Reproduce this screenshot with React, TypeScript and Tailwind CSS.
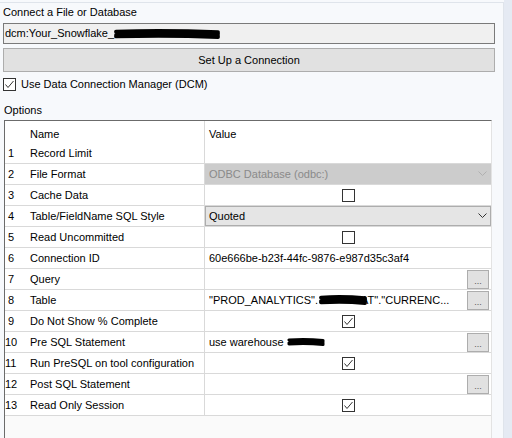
import React from 'react';

type Row = {
  name: string;
  kind: 'empty' | 'disabledSelect' | 'check' | 'select' | 'text' | 'button' | 'textButton';
  value?: React.ReactNode;
  checked?: boolean;
};

const Check: React.FC<{ checked?: boolean }> = ({ checked }) => (
  <div className="w-[13px] h-[13px] border border-[#333333] bg-white flex items-center justify-center">
    {checked && (
      <svg width="11" height="11" viewBox="0 0 11 11">
        <polyline points="1.5,5.5 4,8.5 9.5,2" fill="none" stroke="#333333" strokeWidth="1" />
      </svg>
    )}
  </div>
);

const Chevron: React.FC<{ color: string }> = ({ color }) => (
  <svg width="9" height="6" viewBox="0 0 9 6">
    <polyline points="0.5,0.5 4.5,4.5 8.5,0.5" fill="none" stroke={color} strokeWidth="1" />
  </svg>
);

// marker-pen redaction: a few overlapping back-and-forth strokes
const Scribble: React.FC<{ w: number; h: number }> = ({ w, h }) => {
  const lines = [0.3, 0.5, 0.7, 0.45, 0.6];
  const d = lines
    .map((y, i) => {
      const a = i % 2 === 0 ? 2 : w - 2;
      const b = i % 2 === 0 ? w - 2 : 3;
      return `M${a} ${h * y} Q ${w * 0.5} ${h * (y + (i % 2 ? 0.12 : -0.12))} ${b} ${h * (y + 0.05)}`;
    })
    .join(' ');
  return (
    <svg width={w} height={h} viewBox={`0 0 ${w} ${h}`} className="shrink-0 block">
      <path d={d} fill="none" stroke="#000" strokeWidth={h * 0.32} strokeLinecap="round" />
    </svg>
  );
};

const DotsButton = () => (
  <div className="w-[22px] h-[19px] mr-[2px] bg-[#e1e1e1] border border-[#adadad] flex items-end justify-center pb-[2px] text-[9px] leading-[9px] text-[#555]">
    ...
  </div>
);

const rows: Row[] = [
  { name: 'Record Limit', kind: 'empty' },
  { name: 'File Format', kind: 'disabledSelect', value: 'ODBC Database (odbc:)' },
  { name: 'Cache Data', kind: 'check' },
  { name: 'Table/FieldName SQL Style', kind: 'select', value: 'Quoted' },
  { name: 'Read Uncommitted', kind: 'check' },
  { name: 'Connection ID', kind: 'text', value: '60e666be-b23f-44fc-9876-e987d35c3af4' },
  { name: 'Query', kind: 'button' },
  {
    name: 'Table',
    kind: 'textButton',
    value: (
      <span className="flex items-center whitespace-nowrap">
        "PROD_ANALYTICS".
        <span className="ml-[1px] mr-[-6px] relative z-10">
          <Scribble w={48} h={12} />
        </span>
        AT"."CURRENC...
      </span>
    ),
  },
  { name: 'Do Not Show % Complete', kind: 'check', checked: true },
  {
    name: 'Pre SQL Statement',
    kind: 'textButton',
    value: (
      <span className="flex items-center whitespace-nowrap">
        use warehouse&nbsp;
        <Scribble w={38} h={10} />
      </span>
    ),
  },
  { name: 'Run PreSQL on tool configuration', kind: 'check', checked: true },
  { name: 'Post SQL Statement', kind: 'button' },
  { name: 'Read Only Session', kind: 'check', checked: true },
];

const ValueCell: React.FC<{ row: Row }> = ({ row }) => {
  switch (row.kind) {
    case 'disabledSelect':
      return (
        <div className="h-full bg-[#cccccc] flex items-center justify-between pl-[4px] pr-[4px] text-[#8a8a8a]">
          <span>{row.value}</span>
          <Chevron color="#b0b0b0" />
        </div>
      );
    case 'select':
      return (
        <div className="h-full bg-[#e5e5e5] border border-[#adadad] flex items-center justify-between pl-[3px] pr-[3px]">
          <span>{row.value}</span>
          <Chevron color="#333333" />
        </div>
      );
    case 'check':
      return (
        <div className="h-full flex items-center justify-center">
          <Check checked={row.checked} />
        </div>
      );
    case 'text':
      return <div className="h-full flex items-center pl-[4px]">{row.value}</div>;
    case 'button':
      return (
        <div className="h-full flex items-center justify-end">
          <DotsButton />
        </div>
      );
    case 'textButton':
      return (
        <div className="h-full flex items-center justify-between pl-[4px]">
          {row.value}
          <DotsButton />
        </div>
      );
    default:
      return <div className="h-full" />;
  }
};

export default function App() {
  return (
    <div
      className="w-[512px] h-[438px] bg-[#f7f9fc] flex overflow-hidden text-[11px] text-black"
      style={{ fontFamily: '"Liberation Sans", Arial, sans-serif' }}
    >
      <div className="w-[504px] mt-[2px] border-t border-r border-[#dfe4eb] flex flex-col pl-[3px]">
        <div className="h-[20px] pt-[3px] leading-[13px]">Connect a File or Database</div>
        <div className="w-[492px] h-[21px] border border-[#7a7a7a] bg-[#f0f0f0] flex items-center pl-[1px]">
          <span>dcm:Your_Snowflake_</span>
          <Scribble w={106} h={12} />
        </div>
        <div className="w-[492px] h-[24px] mt-[4px] border border-[#adadad] bg-[#e1e1e1] flex items-center justify-center">
          Set Up a Connection
        </div>
        <div className="h-[15px] mt-[5px] flex items-center gap-[5px]">
          <Check checked />
          <span>Use Data Connection Manager (DCM)</span>
        </div>
        <div className="h-[14px] mt-[11px] pl-[1px] leading-[14px]">Options</div>
        <div className="w-[488px] ml-[1px] mt-[3px] flex-1 border-t border-l border-[#6b6b6b] border-r-[#e3e3e3] border-r bg-[#fafafa] flex flex-col">
          <div className="h-[22px] flex bg-white">
            <div className="w-[25px]" />
            <div className="w-[174px] pt-[5px]">Name</div>
            <div className="flex-1 border-l border-[#d9d9d9] pl-[4px] pt-[5px]">Value</div>
          </div>
          {rows.map((row, i) => (
            <div key={i} className="h-[21px] flex bg-white border-b border-[#d9d9d9]">
              <div className="w-[25px] flex items-center">
                <span className="w-[9px] text-right">{i + 1}</span>
              </div>
              <div className="w-[174px] flex items-center whitespace-nowrap">{row.name}</div>
              <div className="flex-1 border-l border-[#d9d9d9] min-w-0">
                <ValueCell row={row} />
              </div>
            </div>
          ))}
        </div>
      </div>
      <div className="flex-1 bg-[#e5eaf3]" />
    </div>
  );
}
